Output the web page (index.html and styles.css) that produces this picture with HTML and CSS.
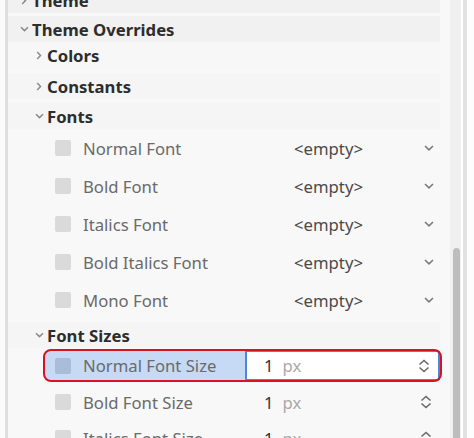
FILE: index.html
```html
<!DOCTYPE html>
<html>
<head>
<meta charset="utf-8">
<link rel="stylesheet" href="styles.css">
</head>
<body>
<div class="window">
  <div class="gutter"></div>
  <div class="border"></div>
  <div class="panel">
    <div class="content">
      <div class="head h0 theme">
        <span class="arrow"><svg width="6" height="9" viewBox="0 0 6 9"><path d="M1.2 1 L4.5 4.5 L1.2 8" fill="none" stroke="#8a8a8a" stroke-width="1.5"/></svg></span>
        <span class="title">Theme</span>
      </div>
      <div class="head h0 overrides">
        <span class="arrow"><svg width="9" height="6" viewBox="0 0 9 6"><path d="M1 1.2 L4.5 4.6 L8 1.2" fill="none" stroke="#8a8a8a" stroke-width="1.5"/></svg></span>
        <span class="title">Theme Overrides</span>
      </div>
      <div class="head h1 colors">
        <span class="arrow"><svg width="6" height="9" viewBox="0 0 6 9"><path d="M1.2 1 L4.5 4.5 L1.2 8" fill="none" stroke="#8a8a8a" stroke-width="1.5"/></svg></span>
        <span class="title">Colors</span>
      </div>
      <div class="head h1 constants">
        <span class="arrow"><svg width="6" height="9" viewBox="0 0 6 9"><path d="M1.2 1 L4.5 4.5 L1.2 8" fill="none" stroke="#8a8a8a" stroke-width="1.5"/></svg></span>
        <span class="title">Constants</span>
      </div>
      <div class="head h1 fonts">
        <span class="arrow"><svg width="9" height="6" viewBox="0 0 9 6"><path d="M1 1.2 L4.5 4.6 L8 1.2" fill="none" stroke="#8a8a8a" stroke-width="1.5"/></svg></span>
        <span class="title">Fonts</span>
      </div>

      <div class="prop font-row">
        <div class="label"><span class="check"></span><span>Normal Font</span></div>
        <div class="value pick"><span class="vtext">&lt;empty&gt;</span><svg class="drop" width="10" height="6" viewBox="0 0 10 6"><path d="M1 1 L5 4.8 L9 1" fill="none" stroke="#7a7a7a" stroke-width="1.6"/></svg></div>
      </div>
      <div class="prop font-row">
        <div class="label"><span class="check"></span><span>Bold Font</span></div>
        <div class="value pick"><span class="vtext">&lt;empty&gt;</span><svg class="drop" width="10" height="6" viewBox="0 0 10 6"><path d="M1 1 L5 4.8 L9 1" fill="none" stroke="#7a7a7a" stroke-width="1.6"/></svg></div>
      </div>
      <div class="prop font-row">
        <div class="label"><span class="check"></span><span>Italics Font</span></div>
        <div class="value pick"><span class="vtext">&lt;empty&gt;</span><svg class="drop" width="10" height="6" viewBox="0 0 10 6"><path d="M1 1 L5 4.8 L9 1" fill="none" stroke="#7a7a7a" stroke-width="1.6"/></svg></div>
      </div>
      <div class="prop font-row">
        <div class="label"><span class="check"></span><span>Bold Italics Font</span></div>
        <div class="value pick"><span class="vtext">&lt;empty&gt;</span><svg class="drop" width="10" height="6" viewBox="0 0 10 6"><path d="M1 1 L5 4.8 L9 1" fill="none" stroke="#7a7a7a" stroke-width="1.6"/></svg></div>
      </div>
      <div class="prop font-row">
        <div class="label"><span class="check"></span><span>Mono Font</span></div>
        <div class="value pick"><span class="vtext">&lt;empty&gt;</span><svg class="drop" width="10" height="6" viewBox="0 0 10 6"><path d="M1 1 L5 4.8 L9 1" fill="none" stroke="#7a7a7a" stroke-width="1.6"/></svg></div>
      </div>

      <div class="head h1 sizes">
        <span class="arrow"><svg width="9" height="6" viewBox="0 0 9 6"><path d="M1 1.2 L4.5 4.6 L8 1.2" fill="none" stroke="#8a8a8a" stroke-width="1.5"/></svg></span>
        <span class="title">Font Sizes</span>
      </div>

      <div class="prop size-row selected">
        <div class="label"><span class="check"></span><span>Normal Font Size</span></div>
        <div class="value spin"><span class="num">1</span><span class="unit">px</span><svg class="updown" width="12" height="14" viewBox="0 0 12 14"><path d="M1.5 5.5 L6 1.5 L10.5 5.5 M1.5 8.5 L6 12.5 L10.5 8.5" fill="none" stroke="#6a6a6a" stroke-width="1.6"/></svg></div>
        <div class="mark"></div>
      </div>
      <div class="prop size-row">
        <div class="label"><span class="check"></span><span>Bold Font Size</span></div>
        <div class="value spin"><span class="num">1</span><span class="unit">px</span><svg class="updown" width="12" height="14" viewBox="0 0 12 14"><path d="M1.5 5.5 L6 1.5 L10.5 5.5 M1.5 8.5 L6 12.5 L10.5 8.5" fill="none" stroke="#6a6a6a" stroke-width="1.6"/></svg></div>
      </div>
      <div class="prop size-row">
        <div class="label"><span class="check"></span><span>Italics Font Size</span></div>
        <div class="value spin"><span class="num">1</span><span class="unit">px</span><svg class="updown" width="12" height="14" viewBox="0 0 12 14"><path d="M1.5 5.5 L6 1.5 L10.5 5.5 M1.5 8.5 L6 12.5 L10.5 8.5" fill="none" stroke="#6a6a6a" stroke-width="1.6"/></svg></div>
      </div>
    </div>
  </div>
  <div class="scroll"><div class="thumb"></div></div>
  <div class="gap"></div>
  <div class="edge"></div>
</div>
</body>
</html>
```

FILE: styles.css
```css
html, body {
  margin: 0;
  padding: 0;
  background: #fdfdfd;
  overflow: hidden;
}

.window {
  display: flex;
  width: 474px;
  height: 438px;
  overflow: hidden;
  font-family: "Noto Sans", "Open Sans", sans-serif;
  font-size: 16.7px;
}

.gutter { width: 5px; background: #fbfbfb; }
.border { width: 3px; background: #dedede; }

.panel {
  width: 442px;
  background: #f8f8f8;
  overflow: hidden;
}

.content {
  margin-top: -13px;
  display: flex;
  flex-direction: column;
}

.head {
  display: flex;
  align-items: center;
  height: 26px;
  margin-right: 10px;
  color: #2d2d2d;
  font-weight: 700;
}

.head .arrow {
  width: 12px;
  display: flex;
  justify-content: center;
  align-items: center;
}

.head .title { margin-left: 2px; }

.h0 { padding-left: 10px; background: #f1f1f1; }
.h0.theme { margin-bottom: 3px; }
.h1 { padding-left: 25px; background: #f5f5f5; }
.h1.colors { background: #f7f7f7; }
.h1.constants { margin-top: 5px; }
.h1.fonts { margin-top: 4px; }
.h1.sizes { margin-top: 3px; }

.prop {
  position: relative;
  display: flex;
  margin-left: 37px;
  margin-right: 10px;
}

.font-row { height: 38px; }
.size-row { height: 36px; }

.label {
  width: 200px;
  display: flex;
  align-items: center;
  padding-left: 10px;
  box-sizing: border-box;
  color: #6a6a6a;
  white-space: nowrap;
}

.check {
  width: 16px;
  height: 16px;
  border-radius: 2px;
  background: #dadada;
  margin-right: 12px;
  flex: none;
}

.value {
  flex: 1;
  display: flex;
  align-items: center;
  box-sizing: border-box;
}

.pick .vtext {
  flex: 1;
  text-align: center;
  color: #4a4a4a;
}

.pick .drop { margin-left: 12px; margin-right: 6px; }

.spin { padding-left: 19px; }
.spin .num { color: #333333; }
.spin .unit { color: #a9a9a9; margin-left: 9px; flex: 1; }
.spin .updown { margin-right: 8px; }

.selected .label {
  background: #c6daf5;
  margin: 2px 0 3px 0;
  border-radius: 6px 0 0 6px;
}
.selected .label .check { background: #a9bdda; }
.selected .value {
  margin: 2px 0 3px 0;
  background: #ffffff;
  border: 2px solid #4f86d8;
  border-radius: 0 3px 3px 0;
  padding-left: 17px;
}

.selected .mark {
  position: absolute;
  left: -2px;
  right: -2px;
  top: 1px;
  bottom: 2px;
  border: 2px solid #d8121f;
  border-radius: 8px;
  pointer-events: none;
}

.scroll {
  width: 11px;
  background: #f0f0f0;
  position: relative;
}

.thumb {
  margin-top: 248px;
  margin-left: 3px;
  width: 7px;
  height: 200px;
  background: #bdbdbd;
  border-radius: 4px 4px 0 0;
}

.gap { width: 2px; background: #ffffff; }
.edge { width: 4px; background: #e2e2e2; }
```
